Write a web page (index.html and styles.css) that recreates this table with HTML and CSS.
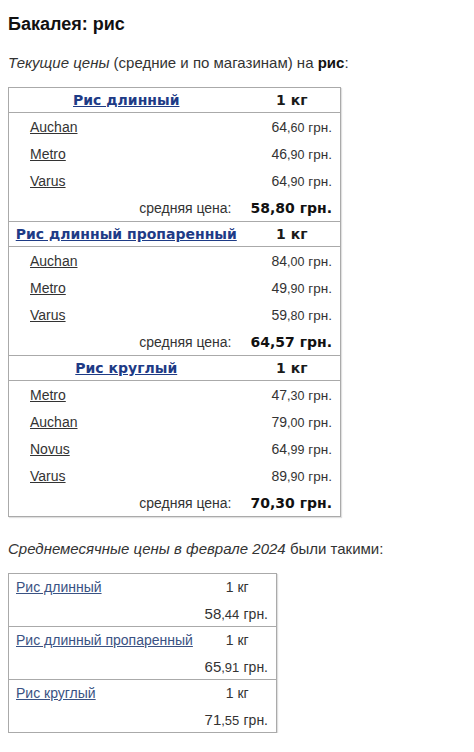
FILE: index.html
```html
<!DOCTYPE html>
<html lang="ru">
<head>
<meta charset="utf-8">
<title>Бакалея: рис</title>
<link rel="stylesheet" href="styles.css">
</head>
<body>
<h1 class="title">Бакалея: рис</h1>
<p class="intro"><i>Текущие цены</i> (средние и по магазинам) на <b>рис</b>:</p>

<table class="prices">
  <colgroup><col class="c-name"><col class="c-val"></colgroup>
  <tbody>
    <tr class="head"><th><a href="#">Рис длинный</a></th><th>1 кг</th></tr>
    <tr><td class="store"><a href="#">Auchan</a></td><td class="price">64<span class="dec">,60</span> <span class="cur">грн.</span></td></tr>
    <tr><td class="store"><a href="#">Metro</a></td><td class="price">46<span class="dec">,90</span> <span class="cur">грн.</span></td></tr>
    <tr><td class="store"><a href="#">Varus</a></td><td class="price">64<span class="dec">,90</span> <span class="cur">грн.</span></td></tr>
    <tr><td class="avg-label">средняя цена:</td><td class="avg">58,80 грн.</td></tr>
  </tbody>
  <tbody>
    <tr class="head"><th><a href="#">Рис длинный пропаренный</a></th><th>1 кг</th></tr>
    <tr><td class="store"><a href="#">Auchan</a></td><td class="price">84<span class="dec">,00</span> <span class="cur">грн.</span></td></tr>
    <tr><td class="store"><a href="#">Metro</a></td><td class="price">49<span class="dec">,90</span> <span class="cur">грн.</span></td></tr>
    <tr><td class="store"><a href="#">Varus</a></td><td class="price">59<span class="dec">,80</span> <span class="cur">грн.</span></td></tr>
    <tr><td class="avg-label">средняя цена:</td><td class="avg">64,57 грн.</td></tr>
  </tbody>
  <tbody>
    <tr class="head"><th><a href="#">Рис круглый</a></th><th>1 кг</th></tr>
    <tr><td class="store"><a href="#">Metro</a></td><td class="price">47<span class="dec">,30</span> <span class="cur">грн.</span></td></tr>
    <tr><td class="store"><a href="#">Auchan</a></td><td class="price">79<span class="dec">,00</span> <span class="cur">грн.</span></td></tr>
    <tr><td class="store"><a href="#">Novus</a></td><td class="price">64<span class="dec">,99</span> <span class="cur">грн.</span></td></tr>
    <tr><td class="store"><a href="#">Varus</a></td><td class="price">89<span class="dec">,90</span> <span class="cur">грн.</span></td></tr>
    <tr><td class="avg-label">средняя цена:</td><td class="avg">70,30 грн.</td></tr>
  </tbody>
</table>

<p class="intro month"><i>Среднемесячные цены в феврале 2024</i> были такими:</p>

<table class="monthly">
  <colgroup><col class="m-name"><col class="m-val"></colgroup>
  <tbody>
    <tr><td class="m-link"><a href="#">Рис длинный</a></td><td class="m-unit">1 кг</td></tr>
    <tr><td></td><td class="m-price">58<span class="dec">,44</span> <span class="cur">грн.</span></td></tr>
  </tbody>
  <tbody>
    <tr><td class="m-link"><a href="#">Рис длинный пропаренный</a></td><td class="m-unit">1 кг</td></tr>
    <tr><td></td><td class="m-price">65<span class="dec">,91</span> <span class="cur">грн.</span></td></tr>
  </tbody>
  <tbody>
    <tr><td class="m-link"><a href="#">Рис круглый</a></td><td class="m-unit">1 кг</td></tr>
    <tr><td></td><td class="m-price">71<span class="dec">,55</span> <span class="cur">грн.</span></td></tr>
  </tbody>
</table>
</body>
</html>
```

FILE: styles.css
```css
body {
  margin: 8px;
  font-family: "Liberation Sans", Arial, sans-serif;
  color: #222;
  background: #fff;
}

.title {
  font-size: 18px;
  font-weight: bold;
  line-height: 21px;
  margin: 6px 0 0;
  color: #111;
}

.intro {
  font-size: 15px;
  line-height: 17px;
  margin: 19px 0 16px;
  color: #333;
}
.intro b { color: #111; }

.month {
  margin: 23px 0 16px;
}

table {
  border-collapse: collapse;
  border: 1px solid #aaa;
  box-shadow: 1px 1px 1px rgba(0,0,0,0.12);
}

.prices { width: 332px; table-layout: fixed; }
.c-name { width: 235px; }
.c-val { width: 97px; }

.prices tbody + tbody tr.head th { border-top: 1px solid #aaa; }

.prices th {
  font-family: "DejaVu Sans", Verdana, sans-serif;
  font-size: 14px;
  font-weight: bold;
  height: 24px;
  padding: 0;
  text-align: center;
  border-bottom: 1px solid #aaa;
  color: #1a1a1a;
}
.prices th a { color: #1e3b86; }

.prices td {
  height: 27px;
  padding: 0;
  font-size: 14px;
  color: #333;
}

.prices td.store { padding-left: 21px; }
.store a { color: #333; }

.prices td.price, .monthly td.m-price {
  text-align: right;
  padding-right: 8px;
  white-space: nowrap;
}
.dec { font-size: 12.5px; }
.cur { font-size: 13.5px; }

.prices td.avg-label {
  text-align: right;
  padding-right: 12px;
}
.prices td.avg {
  text-align: right;
  padding-right: 8px;
  font-family: "DejaVu Sans", Verdana, sans-serif;
  font-weight: bold;
  font-size: 14px;
  color: #111;
  white-space: nowrap;
}

.monthly { width: 268px; table-layout: fixed; }
.m-name { width: 190px; }
.m-val { width: 78px; }
.monthly tbody + tbody tr:first-child td { border-top: 1px solid #aaa; }
.monthly td {
  height: 26px;
  padding: 0;
  font-size: 14px;
  color: #333;
}
.monthly td.m-link { padding-left: 7px; }
.m-link a { color: #3a5283; }
.m-unit { text-align: center; }
.monthly td.m-price { font-size: 15px; }
.m-price .dec { font-size: 13px; }
.m-price .cur { font-size: 14px; }
```
